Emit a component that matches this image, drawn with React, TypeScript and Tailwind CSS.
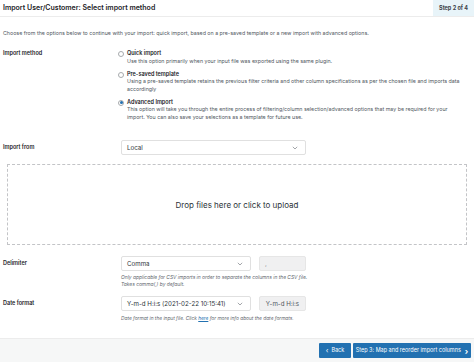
import React from 'react';

const Chevron: React.FC = () => (
  <svg width="6" height="4" viewBox="0 0 6 4" className="text-[#8c8f94]">
    <path d="M0.8 0.8 L3 3 L5.2 0.8" fill="none" stroke="currentColor" strokeWidth="0.8" />
  </svg>
);

const Select: React.FC<{ value: string; width: string }> = ({ value, width }) => (
  <div
    className={`${width} h-[15px] flex items-center justify-between pl-[5px] pr-[7px] border border-[#e0e0e0] rounded-[2px] bg-white text-[6.2px] text-[#2c3338]`}
  >
    <span>{value}</span>
    <Chevron />
  </div>
);

const Radio: React.FC<{ checked?: boolean }> = ({ checked }) => (
  <span className="mt-[1px] w-[6px] h-[6px] rounded-full border border-[#a7aaad] bg-white flex items-center justify-center shrink-0">
    {checked && <span className="w-[3px] h-[3px] rounded-full bg-[#2271b1]" />}
  </span>
);

const options = [
  {
    title: 'Quick import',
    desc: 'Use this option primarily when your input file was exported using the same plugin.',
  },
  {
    title: 'Pre-saved template',
    desc: 'Using a pre-saved template retains the previous filter criteria and other column specifications as per the chosen file and imports data accordingly',
  },
  {
    title: 'Advanced Import',
    desc: 'This option will take you through the entire process of filtering/column selection/advanced options that may be required for your import. You can also save your selections as a template for future use.',
    checked: true,
  },
];

const App: React.FC = () => {
  return (
    <div className="w-[474px] h-[362px] bg-white flex flex-col text-[#50575e] font-['Inter','Liberation_Sans',sans-serif] overflow-hidden">
      <div className="h-[17px] shrink-0 flex items-center justify-between border-b border-[#ececec] pl-[3px]">
        <span className="text-[7px] font-semibold text-[#1d2327]">Import User/Customer: Select import method</span>
        <span className="h-[16px] px-[6px] flex items-center bg-[#e8f4f9] text-[5.5px] font-bold text-[#3c434a]">
          Step 2 of 4
        </span>
      </div>

      <p className="mt-[13px] pl-[3px] text-[5.3px] leading-[7px]">
        Choose from the options below to continue with your import: quick import, based on a pre-saved template or a new import with advanced options.
      </p>

      <div className="mt-[13px] flex">
        <div className="w-[118px] pl-[3px] text-[5.5px] font-semibold text-[#1d2327] leading-[7.5px]">Import method</div>
        <div className="flex-1 flex flex-col gap-[5.5px] pr-[8px]">
          {options.map((o) => (
            <div key={o.title} className="flex gap-[3px]">
              <Radio checked={o.checked} />
              <div className="flex flex-col">
                <span className="text-[5.5px] font-semibold text-[#1d2327] leading-[7.5px]">{o.title}</span>
                <span className="text-[5.3px] leading-[7.5px]">{o.desc}</span>
              </div>
            </div>
          ))}
        </div>
      </div>

      <div className="mt-[19px] flex items-center">
        <div className="w-[121px] pl-[3px] text-[5.5px] font-semibold text-[#1d2327]">Import from</div>
        <Select value="Local" width="w-[185px]" />
      </div>

      <div className="mt-[9px] mx-[7px] h-[81px] shrink-0 border border-dashed border-[#c3c4c7] flex items-center justify-center text-[8px] text-[#2c3338]">
        Drop files here or click to upload
      </div>

      <div className="mt-[11px] flex">
        <div className="w-[121px] pl-[3px] h-[15px] flex items-center text-[5.5px] font-semibold text-[#1d2327]">Delimiter</div>
        <div className="flex flex-col">
          <div className="flex items-center gap-[8px]">
            <Select value="Comma" width="w-[130px]" />
            <div className="w-[47px] h-[15px] bg-[#f0f0f1] border border-[#e6e6e6] rounded-[2px] flex items-center pl-[5px] text-[6.2px] text-[#8c8f94]">
              ,
            </div>
          </div>
          <p className="mt-[3px] text-[4.9px] italic leading-[6.5px] text-[#646970]">
            Only applicable for CSV imports in order to separate the columns in the CSV file.
            <br />
            Takes comma(,) by default.
          </p>
        </div>
      </div>

      <div className="mt-[9px] flex">
        <div className="w-[121px] pl-[3px] h-[15px] flex items-center text-[5.5px] font-semibold text-[#1d2327]">Date format</div>
        <div className="flex flex-col">
          <div className="flex items-center gap-[8px]">
            <Select value="Y-m-d H:i:s (2021-02-22 10:15:41)" width="w-[130px]" />
            <div className="w-[47px] h-[15px] bg-[#f0f0f1] border border-[#e6e6e6] rounded-[2px] flex items-center justify-center text-[6.2px] text-[#50575e]">
              Y-m-d H:i:s
            </div>
          </div>
          <p className="mt-[4px] text-[4.8px] italic leading-[6px] text-[#646970]">
            Date format in the input file. Click <span className="text-[#2271b1] underline">here</span> for more info about the date formats.
          </p>
        </div>
      </div>

      <div className="mt-auto h-[24px] shrink-0 bg-[#f6f7f7] border-t border-[#ececec] flex items-center justify-end gap-[2px] pr-[3px]">
        <button className="h-[15px] w-[32px] bg-[#2271b1] text-white text-[5.5px] flex items-center justify-center gap-[3px] rounded-[1px]">
          <span className="text-[7px] leading-none">‹</span>Back
        </button>
        <button className="h-[15px] w-[118px] bg-[#2271b1] text-white text-[5.5px] flex items-center justify-center gap-[4px] rounded-[1px]">
          Step 3: Map and reorder import columns<span className="text-[8px] leading-none font-bold">›</span>
        </button>
      </div>
    </div>
  );
};

export default App;
